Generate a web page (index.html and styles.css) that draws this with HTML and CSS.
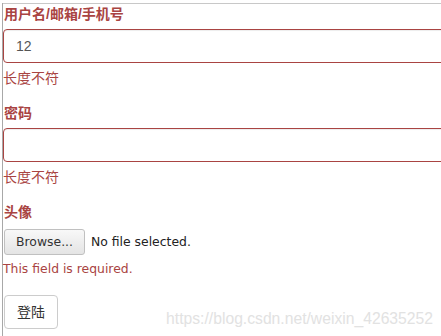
FILE: index.html
```html
<!DOCTYPE html>
<html>
<head>
<meta charset="utf-8">
<link rel="stylesheet" href="styles.css">
</head>
<body>
<div class="vline">
  <div class="hline">
    <form class="form">
      <div class="group">
        <label class="label">用户名/邮箱/手机号</label>
        <div class="input">12</div>
        <span class="help">长度不符</span>
      </div>
      <div class="group">
        <label class="label">密码</label>
        <div class="input"></div>
        <span class="help">长度不符</span>
      </div>
      <div class="group">
        <label class="label">头像</label>
        <div class="file">
          <span class="browse">Browse...</span>
          <span class="nofile">No file selected.</span>
        </div>
        <span class="help help-en">This field is required.</span>
      </div>
      <span class="btn">登陆</span>
    </form>
  </div>
</div>
<div class="watermark">https://blog.csdn.net/weixin_42635252</div>
</body>
</html>
```

FILE: styles.css
```css
html, body {
  margin: 0;
  padding: 0;
  background: #fff;
  overflow: hidden;
}
body {
  width: 441px;
  height: 336px;
  position: relative;
  font-family: "Liberation Sans", "Noto Sans CJK SC", sans-serif;
  font-size: 14px;
  line-height: 20px;
  color: #333;
}
.vline {
  margin-left: 2px;
  border-left: 1px solid #a8a8a8;
  height: 336px;
}
.hline {
  margin-top: 3px;
  border-top: 1px solid #c8c8c8;
}
.form {
  display: flex;
  flex-direction: column;
  align-items: flex-start;
  width: 460px;
}
.group {
  display: flex;
  flex-direction: column;
  align-items: flex-start;
  margin-bottom: 15px;
  width: 100%;
}
.label {
  font-weight: bold;
  color: #a94442;
  margin-bottom: 5px;
  margin-left: 1px;
}
.input {
  box-sizing: border-box;
  width: 100%;
  height: 34px;
  padding: 6px 12px;
  border: 1px solid #a94442;
  border-radius: 4px;
  color: #555;
  line-height: 20px;
  box-shadow: inset 0 1px 1px rgba(0,0,0,0.075);
}
.help {
  display: block;
  margin-top: 5px;
  color: #a94442;
}
.help-en {
  font-family: "DejaVu Sans", sans-serif;
  font-size: 12.4px;
  margin-top: 4px;
}
.file {
  display: flex;
  align-items: center;
  gap: 6px;
  margin-top: 2px;
  margin-left: 1px;
  font-family: "DejaVu Sans", sans-serif;
  font-size: 12.4px;
}
.browse {
  box-sizing: border-box;
  height: 26px;
  width: 81px;
  display: flex;
  align-items: center;
  justify-content: center;
  border: 1px solid #c0c0c0;
  border-radius: 3px;
  background: linear-gradient(#f8f8f8, #e4e4e4);
  color: #333;
}
.nofile {
  color: #222;
}
.btn {
  box-sizing: border-box;
  margin-left: 1px;
  margin-top: 1px;
  height: 34px;
  padding: 6px 12px;
  border: 1px solid #ccc;
  border-radius: 4px;
  color: #333;
  background: #fff;
}
.watermark {
  position: absolute;
  right: 8px;
  bottom: 8px;
  font-family: "Liberation Sans", sans-serif;
  font-size: 15.7px;
  color: #e2e2e2;
  line-height: 18px;
}
```
